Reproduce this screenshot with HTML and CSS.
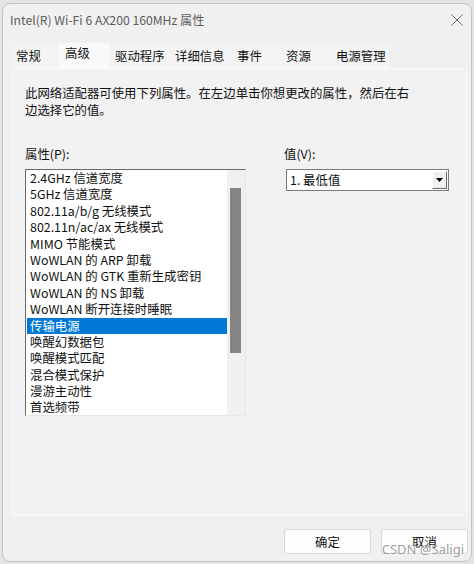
FILE: index.html
```html
<!DOCTYPE html>
<html lang="zh-CN">
<head>
<meta charset="utf-8">
<title>属性</title>
<link rel="stylesheet" href="styles.css">
</head>
<body>
<div class="window">
  <div class="titlebar">
    <span class="title">Intel(R) Wi-Fi 6 AX200 160MHz 属性</span>
    <svg class="close" width="12" height="12" viewBox="0 0 12 12"><path d="M0.5 0.5 L11.5 11.5 M11.5 0.5 L0.5 11.5" stroke="#6e6e6e" stroke-width="1"/></svg>
  </div>
  <div class="tabs">
    <div class="tab tab-w45">常规</div>
    <div class="tab tab-active">高级</div>
    <div class="tab tab-w60">驱动程序</div>
    <div class="tab tab-w60">详细信息</div>
    <div class="tab tab-w52">事件</div>
    <div class="tab tab-w46">资源</div>
    <div class="tab tab-w59">电源管理</div>
  </div>
  <div class="panel">
    <p class="desc">此网络适配器可使用下列属性。在左边单击你想更改的属性，然后在右<br>边选择它的值。</p>
    <div class="cols">
      <div class="col-left">
        <div class="label">属性(P):</div>
        <div class="listbox">
          <ul class="items">
            <li>2.4GHz 信道宽度</li>
            <li>5GHz 信道宽度</li>
            <li>802.11a/b/g 无线模式</li>
            <li>802.11n/ac/ax 无线模式</li>
            <li>MIMO 节能模式</li>
            <li>WoWLAN 的 ARP 卸载</li>
            <li>WoWLAN 的 GTK 重新生成密钥</li>
            <li>WoWLAN 的 NS 卸载</li>
            <li>WoWLAN 断开连接时睡眠</li>
            <li class="selected">传输电源</li>
            <li>唤醒幻数据包</li>
            <li>唤醒模式匹配</li>
            <li>混合模式保护</li>
            <li>漫游主动性</li>
            <li>首选频带</li>
          </ul>
          <div class="scrollbar"><div class="thumb"></div></div>
        </div>
      </div>
      <div class="col-right">
        <div class="label">值(V):</div>
        <div class="combo">
          <span class="combo-text">1. 最低值</span>
          <span class="combo-btn"><svg width="7" height="4" viewBox="0 0 7 4"><path d="M0 0 L7 0 L3.5 4 Z" fill="#000"/></svg></span>
        </div>
      </div>
    </div>
  </div>
  <div class="footer">
    <button class="btn">确定</button>
    <button class="btn">取消</button>
  </div>
  <div class="watermark">CSDN @Saligi</div>
</div>
</body>
</html>
```
FILE: styles.css
```css
html, body {
  margin: 0;
  padding: 0;
}
body {
  background: #e4e4e4;
  padding: 3px 0 0 2px;
  width: 474px;
  height: 564px;
  box-sizing: border-box;
  overflow: hidden;
  font-family: "Noto Sans CJK SC", "Noto Sans", sans-serif;
  font-size: 12.4px;
  color: #1a1a1a;
}
.window {
  position: relative;
  width: 470px;
  height: 559px;
  box-sizing: border-box;
  background: #f0f0f0;
  border: 1px solid #c4c4c4;
  border-radius: 8px;
  display: flex;
  flex-direction: column;
}
.titlebar {
  height: 37px;
  display: flex;
  align-items: center;
  justify-content: space-between;
  padding: 0 8px 0 7px;
}
.title {
  font-size: 12.2px;
  color: #5c5c5c;
  margin-top: -6px;
}
.close {
  margin-top: -6px;
}
.tabs {
  display: flex;
  height: 25px;
  margin-top: 2px;
  padding-left: 9px;
  align-items: flex-end;
}
.tab {
  height: 23px;
  line-height: 22px;
  padding-left: 4px;
  box-sizing: border-box;
  background: #f4f4f4;
  margin-right: 1px;
  color: #111;
}
.tab-w45 { width: 45px; }
.tab-w60 { width: 59px; padding-left: 4px; }
.tab-w52 { width: 51px; padding-left: 6px; }
.tab-w46 { width: 46px; padding-left: 3px; }
.tab-w59 { width: 59px; padding-left: 6px; }
.tab-active {
  width: 52px;
  height: 25px;
  padding-left: 7px;
  line-height: 20px;
  background: #f9f9f9;
}
.panel {
  height: 448px;
  margin: 0 4px 0 9px;
  box-sizing: border-box;
  background: #f2f2f2;
  border: 1px solid #fafafa;
  padding: 16px 12px 0 12px;
}
.desc {
  margin: 0;
  line-height: 17px;
  color: #111;
}
.cols {
  display: flex;
  margin-top: 27px;
}
.col-left {
  width: 221px;
}
.col-right {
  margin-left: 38px;
}
.label {
  line-height: 17px;
  color: #111;
}
.listbox {
  margin-top: 6px;
  height: 247px;
  box-sizing: border-box;
  background: #fff;
  border-top: 1px solid #6a6a6a;
  border-left: 1px solid #6a6a6a;
  border-right: 1px solid #e6e6e6;
  border-bottom: 1px solid #e6e6e6;
  display: flex;
  overflow: hidden;
}
.items {
  list-style: none;
  margin: 0;
  padding: 0 0 0 1px;
  flex: 1;
}
.items li {
  height: 16.4px;
  line-height: 16px;
  padding-left: 3px;
  white-space: nowrap;
  color: #111;
}
.items li.selected {
  background: #0078d7;
  color: #fff;
}
.scrollbar {
  width: 18px;
  background: #f0f0f0;
  padding: 18px 0 0 3px;
  box-sizing: border-box;
}
.thumb {
  width: 11px;
  height: 165px;
  background: #858585;
}
.combo {
  margin-top: 6px;
  margin-left: 2px;
  width: 163px;
  height: 22px;
  box-sizing: border-box;
  background: #fff;
  border: 1px solid #7a7a7a;
  display: flex;
  align-items: center;
  justify-content: space-between;
}
.combo-text {
  padding-left: 3px;
  color: #111;
}
.combo-btn {
  width: 15px;
  height: 18px;
  margin-right: 1px;
  box-sizing: border-box;
  background: #f0f0f0;
  border-top: 1px solid #fff;
  border-left: 1px solid #fff;
  border-right: 1px solid #6a6a6a;
  border-bottom: 1px solid #6a6a6a;
  display: flex;
  align-items: center;
  justify-content: center;
}
.footer {
  display: flex;
  justify-content: flex-end;
  gap: 10px;
  margin-top: 13px;
  padding-right: 3px;
}
.btn {
  width: 87px;
  height: 25px;
  font-family: inherit;
  font-size: 12.4px;
  color: #111;
  background: #fdfdfd;
  border: 1px solid #dadada;
  border-radius: 2px;
  padding: 0;
}
.watermark {
  position: absolute;
  right: 7px;
  bottom: 3px;
  font-family: "Noto Sans", sans-serif;
  font-size: 13px;
  color: rgba(140, 140, 140, 0.85);
  text-shadow: 0 0 1px #fff;
}
```
